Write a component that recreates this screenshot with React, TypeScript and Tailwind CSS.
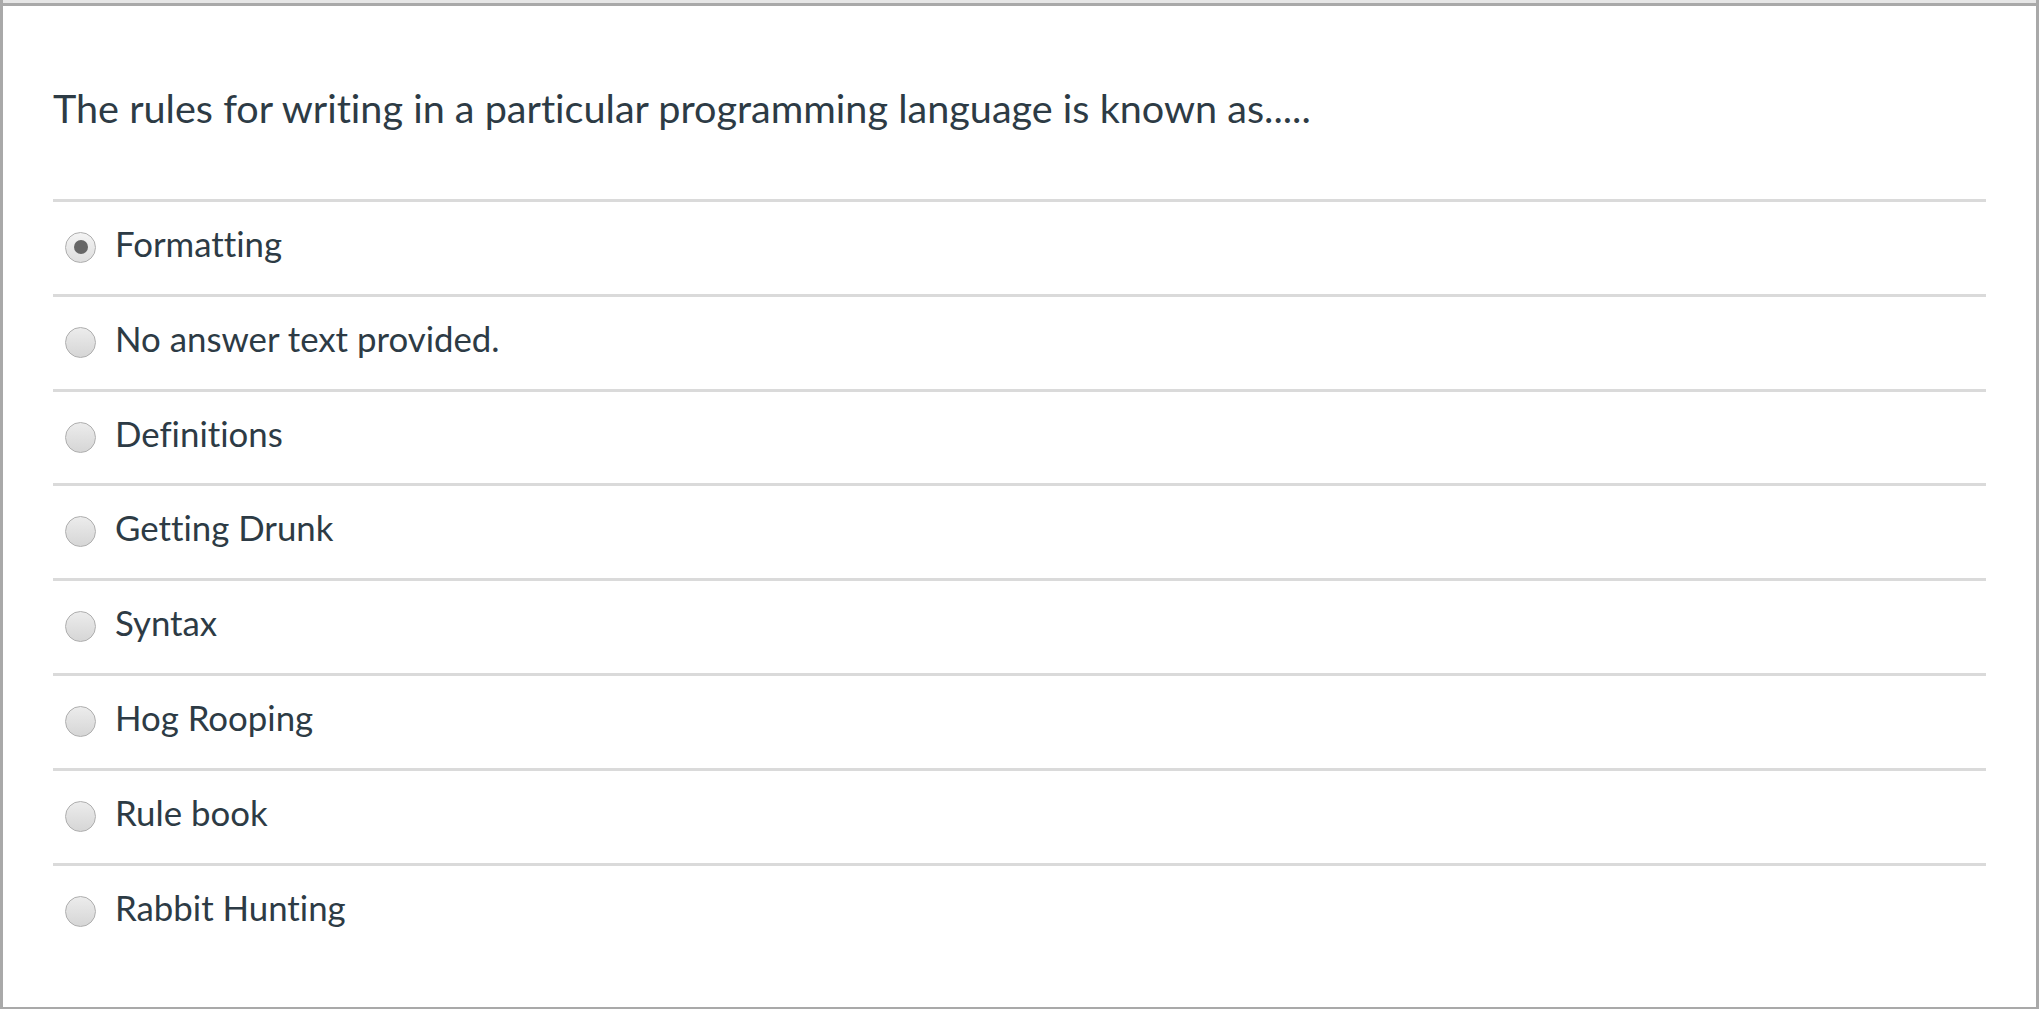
const answers = [
  { label: 'Formatting', checked: true },
  { label: 'No answer text provided.', checked: false },
  { label: 'Definitions', checked: false },
  { label: 'Getting Drunk', checked: false },
  { label: 'Syntax', checked: false },
  { label: 'Hog Rooping', checked: false },
  { label: 'Rule book', checked: false },
  { label: 'Rabbit Hunting', checked: false },
]

function Radio({ checked }: { checked: boolean }) {
  return (
    <span
      className={`mt-[8px] ml-[12px] mr-[19px] flex h-[31px] w-[31px] shrink-0 items-center justify-center rounded-full border-[1.3px] border-[#aeaeae] ${
        checked
          ? 'bg-gradient-to-b from-[#f4f4f4] to-[#dedede]'
          : 'bg-gradient-to-b from-[#ececec] to-[#d6d6d6]'
      }`}
    >
      {checked ? <span className="h-[14px] w-[14px] rounded-full bg-[#666666]" /> : null}
    </span>
  )
}

export default function App() {
  return (
    <div
      className="h-[1009px] w-full overflow-hidden bg-white text-[#2d3b45] [font-variant-ligatures:none]"
      style={{ fontFamily: 'Lato, "Noto Sans", sans-serif' }}
    >
      <div className="flex h-full flex-col border-x-[3px] border-b-[2px] border-[#a9a9a9]">
        <div className="h-[3px] shrink-0 bg-[#e6e6e6]" />
        <div className="h-[3px] shrink-0 bg-[#a9a9a9]" />
        <div className="flex flex-col px-[50px] pt-[79px]">
          <h1 className="m-0 text-[39.6px] font-normal leading-[46.8px]">
            The rules for writing in a particular programming language is known as.....
          </h1>
          <ul className="mt-[67px] flex flex-col">
            {answers.map((a) => (
              <li
                key={a.label}
                className="flex h-[94.86px] items-start border-t-[3px] border-[#dadada] pt-[22px]"
              >
                <Radio checked={a.checked} />
                <span className="text-[34.8px] leading-[40.6px]">{a.label}</span>
              </li>
            ))}
          </ul>
        </div>
      </div>
    </div>
  )
}
